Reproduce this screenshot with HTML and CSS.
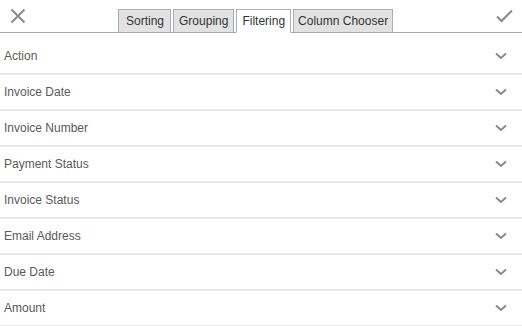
FILE: index.html
```html
<!DOCTYPE html>
<html>
<head>
  <title>Grid Settings</title>
  <link rel="stylesheet" href="styles.css">
</head>
<body>

  <div class="header">
    <button class="icon-btn close-btn" title="Close">
      <svg width="16" height="16" viewBox="0 0 16 16"><path d="M1.5 1.5 L14.5 14.5 M14.5 1.5 L1.5 14.5" stroke="#8a8a8a" stroke-width="2" fill="none"/></svg>
    </button>
    <div class="tabs">
      <div class="tab tab-wide">Sorting</div>
      <div class="tab">Grouping</div>
      <div class="tab active">Filtering</div>
      <div class="tab tab-narrow">Column Chooser</div>
    </div>
    <button class="icon-btn ok-btn" title="Apply">
      <svg width="17" height="14" viewBox="0 0 17 14"><path d="M1 7.5 L5.5 12 L16 1.5" stroke="#8a8a8a" stroke-width="2" fill="none"/></svg>
    </button>
  </div>

  <div class="list">
    <div class="row"><span>Action</span><svg class="chev" width="12" height="8" viewBox="0 0 12 8"><path d="M1 1.5 L6 6 L11 1.5" stroke="#8a8a8a" stroke-width="2" fill="none"/></svg></div>
    <div class="row"><span>Invoice Date</span><svg class="chev" width="12" height="8" viewBox="0 0 12 8"><path d="M1 1.5 L6 6 L11 1.5" stroke="#8a8a8a" stroke-width="2" fill="none"/></svg></div>
    <div class="row"><span>Invoice Number</span><svg class="chev" width="12" height="8" viewBox="0 0 12 8"><path d="M1 1.5 L6 6 L11 1.5" stroke="#8a8a8a" stroke-width="2" fill="none"/></svg></div>
    <div class="row"><span>Payment Status</span><svg class="chev" width="12" height="8" viewBox="0 0 12 8"><path d="M1 1.5 L6 6 L11 1.5" stroke="#8a8a8a" stroke-width="2" fill="none"/></svg></div>
    <div class="row"><span>Invoice Status</span><svg class="chev" width="12" height="8" viewBox="0 0 12 8"><path d="M1 1.5 L6 6 L11 1.5" stroke="#8a8a8a" stroke-width="2" fill="none"/></svg></div>
    <div class="row"><span>Email Address</span><svg class="chev" width="12" height="8" viewBox="0 0 12 8"><path d="M1 1.5 L6 6 L11 1.5" stroke="#8a8a8a" stroke-width="2" fill="none"/></svg></div>
    <div class="row"><span>Due Date</span><svg class="chev" width="12" height="8" viewBox="0 0 12 8"><path d="M1 1.5 L6 6 L11 1.5" stroke="#8a8a8a" stroke-width="2" fill="none"/></svg></div>
    <div class="row"><span>Amount</span><svg class="chev" width="12" height="8" viewBox="0 0 12 8"><path d="M1 1.5 L6 6 L11 1.5" stroke="#8a8a8a" stroke-width="2" fill="none"/></svg></div>
  </div>

</body>
</html>
```

FILE: styles.css
```css
body {
  margin: 0;
  font-family: "Liberation Sans", Arial, sans-serif;
  background: #fff;
  overflow: hidden;
}
.header {
  display: flex;
  align-items: flex-end;
  height: 32px;
  border-bottom: 1px solid #a6a6a6;
}
.icon-btn {
  border: none;
  background: none;
  padding: 0;
  cursor: pointer;
  align-self: flex-start;
  display: flex;
}
.close-btn { margin: 8px 0 0 10px; }
.ok-btn { margin: 9px 9px 0 auto; }
.tabs {
  display: flex;
  gap: 2px;
  margin-left: 92px;
  margin-bottom: -1px;
}
.tab {
  height: 22px;
  line-height: 23px;
  padding: 0 5px;
  font-size: 12px;
  color: #333;
  background: #e2e2e2;
  border: 1px solid #adadad;
  border-bottom: 1px solid #a6a6a6;
}
.tab-wide { padding: 0 6px 0 7px; }
.tab-narrow { padding: 0 4px; }
.tab.active {
  background: #fff;
  border-bottom-color: #fff;
}
.list {
  padding-top: 6px;
}
.row {
  display: flex;
  align-items: center;
  justify-content: space-between;
  height: 34px;
  padding: 0 4px;
  border-bottom: 2px solid #e8e8e8;
  font-size: 12px;
  color: #5a5a5a;
}
.chev { margin-right: 11px; }
```
